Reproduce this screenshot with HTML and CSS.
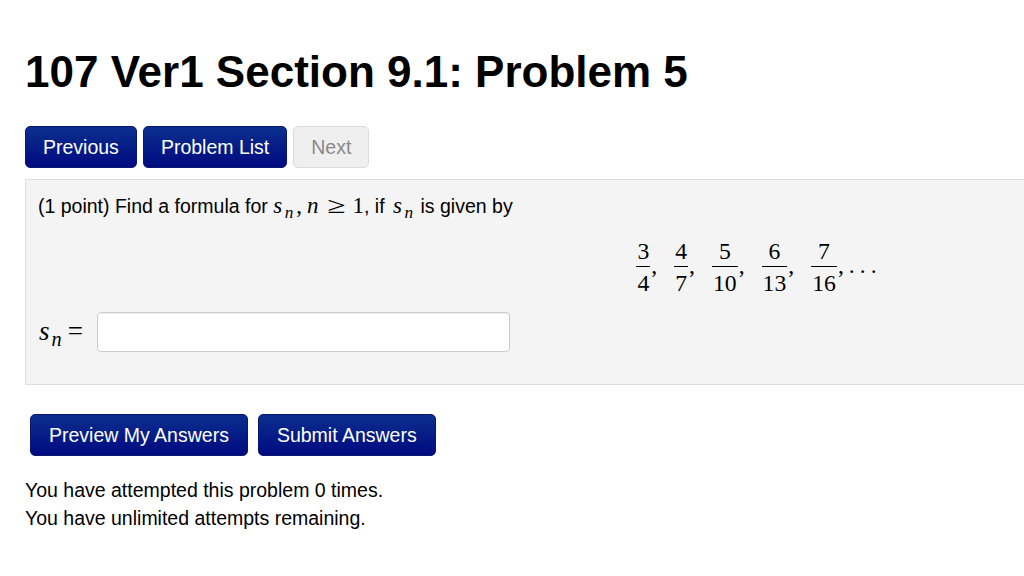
FILE: index.html
```html
<!DOCTYPE html>
<html lang="en">
<head>
<meta charset="utf-8">
<title>107 Ver1 Section 9.1: Problem 5</title>
<link rel="stylesheet" href="styles.css">
</head>
<body>
<div class="page">
  <h1 class="title">107 Ver1 Section 9.1: Problem 5</h1>
  <div class="nav">
    <a class="btn">Previous</a>
    <a class="btn">Problem List</a>
    <a class="btn disabled">Next</a>
  </div>
  <div class="problem">
    <p class="intro">(1 point) Find a formula for <span class="m"><i class="s">s</i><sub>n</sub><span class="mc">,</span><i class="n">n</i><span class="rel">≥</span>1</span>, if <span class="m m2"><i class="s">s</i><sub>n</sub></span> is given by</p>
    <div class="display">
      <span class="frac"><span class="num">3</span><span class="den">4</span></span><span class="comma">,</span>
      <span class="frac"><span class="num">4</span><span class="den">7</span></span><span class="comma">,</span>
      <span class="frac"><span class="num">5</span><span class="den">10</span></span><span class="comma">,</span>
      <span class="frac"><span class="num">6</span><span class="den">13</span></span><span class="comma">,</span>
      <span class="frac"><span class="num">7</span><span class="den">16</span></span><span class="comma last">,</span><span class="dots">...</span>
    </div>
    <div class="answer">
      <span class="lbl"><i class="s">s</i><sub>n</sub><span class="eq">=</span></span>
      <input class="field" type="text" aria-label="answer">
    </div>
  </div>
  <div class="actions">
    <button class="btn">Preview My Answers</button>
    <button class="btn">Submit Answers</button>
  </div>
  <div class="status">
    <div>You have attempted this problem 0 times.</div>
    <div>You have unlimited attempts remaining.</div>
  </div>
</div>
</body>
</html>
```
FILE: styles.css
```css
html, body {
  margin: 0;
  padding: 0;
  overflow: hidden;
  background: #ffffff;
}
body {
  font-family: "Liberation Sans", Arial, sans-serif;
  color: #000000;
}
.page {
  padding-left: 25px;
}
.title {
  margin: 0;
  padding-top: 48px;
  font-size: 44px;
  line-height: 48px;
  font-weight: bold;
}
.nav {
  display: flex;
  gap: 6px;
  margin-top: 30px;
}
.btn {
  display: inline-block;
  font-family: "Liberation Sans", Arial, sans-serif;
  font-size: 19.5px;
  line-height: 26px;
  padding: 7px 17px;
  border: 1px solid #0a1770;
  border-radius: 5px;
  color: #ffffff;
  background: linear-gradient(#0b2f8e, #000a80);
  cursor: pointer;
}
.btn.disabled {
  background: #efefef;
  border-color: #dcdcdc;
  color: #8a8a8a;
}
.problem {
  margin-top: 11px;
  width: 999px;
  box-sizing: border-box;
  border: 1px solid #dddddd;
  border-right: none;
  background: #f4f4f4;
  padding: 12px 12px 0;
}
.intro {
  margin: 0;
  font-size: 19.5px;
  line-height: 28px;
}
.m {
  font-family: "Liberation Serif", "Times New Roman", serif;
  font-size: 23px;
}
.m2 {
  margin-left: 3px;
  margin-right: 2px;
}
.s {
  font-style: italic;
  margin-right: 2.5px;
}
.n {
  font-style: italic;
}
.mc {
  margin-left: 3px;
  margin-right: 5px;
}
.rel {
  display: inline-block;
  width: 19px;
  margin: 0 7px 0 8px;
  text-align: center;
  transform: scaleX(1.45);
}
sub {
  font-size: 75%;
  font-style: italic;
  vertical-align: -0.3em;
  line-height: 0;
}
.display {
  display: flex;
  justify-content: center;
  align-items: flex-start;
  margin-top: 19px;
  padding-left: 468px;
  font-family: "Liberation Serif", "Times New Roman", serif;
  font-size: 23.7px;
}
.frac {
  display: inline-flex;
  flex-direction: column;
  text-align: center;
}
.num, .den {
  line-height: 24px;
  padding: 0 1px;
}
.num {
  padding-bottom: 3px;
  border-bottom: 1.5px solid #000000;
}
.den {
  padding-top: 3.5px;
}
.comma {
  line-height: 24px;
  margin-top: 14px;
  margin-left: 1px;
  margin-right: 17px;
}
.comma.last {
  margin-right: 5px;
}
.dots {
  line-height: 24px;
  margin-top: 14px;
  letter-spacing: 5px;
}
.answer {
  display: flex;
  align-items: center;
  margin-top: 17px;
  margin-bottom: 32px;
}
.lbl {
  width: 59px;
  font-family: "Liberation Serif", "Times New Roman", serif;
  font-size: 27px;
  padding-left: 1px;
  box-sizing: border-box;
}
.lbl .s {
  margin-right: 2px;
}
.eq {
  margin-left: 6px;
}
.field {
  width: 413px;
  height: 40px;
  box-sizing: border-box;
  border: 1px solid #cccccc;
  border-radius: 4px;
  background: #ffffff;
  box-shadow: inset 0 1px 1px rgba(0, 0, 0, 0.06);
  margin: 0;
  padding: 4px 8px;
}
.actions {
  display: flex;
  gap: 10px;
  margin: 29px 0 0 5px;
}
.actions .btn {
  padding: 7px 18px;
}
.status {
  margin-top: 20px;
  font-size: 19.5px;
  line-height: 28px;
}
```
